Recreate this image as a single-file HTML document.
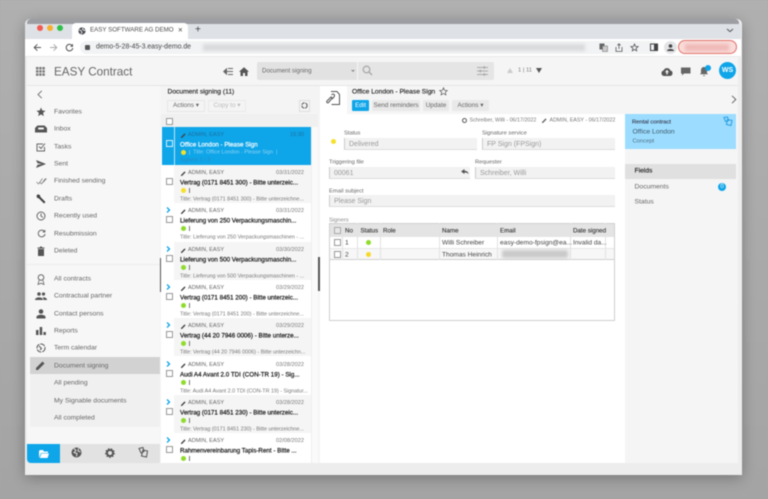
<!DOCTYPE html>
<html><head><meta charset="utf-8"><style>
*{box-sizing:border-box}
html,body{margin:0;padding:0;width:768px;height:499px;overflow:hidden;background:#a6a6a6}
body{font-family:"Liberation Sans",sans-serif;position:relative}
#r{position:absolute;left:0;top:0;width:768px;height:499px;filter:blur(.45px);overflow:hidden}
.b,.t,svg{position:absolute}
.t{white-space:nowrap;line-height:10px;font-size:6.6px;color:#666;transform:translateY(.7px)}
.s{left:54px;font-size:6.8px;color:#666}
.k{color:#222;-webkit-text-stroke:.15px #222}
.btn{position:absolute;height:12px;background:#e9e9e9;border-radius:1px;text-align:center;line-height:12px;font-size:6.4px;color:#666}
.f{position:absolute;background:#f2f2f2;border-left:1px solid #ccc;border-bottom:1px solid #ddd;height:12px;font-size:7px;line-height:13px;color:#999;padding-left:4px}
.l{font-size:5.8px;color:#666}
.cb{position:absolute;width:7px;height:7px;border:1px solid #999;background:#fff}
.row{position:absolute;left:162px;width:149px;height:38px}
.row .g{position:absolute;left:12px;top:0;width:137px;height:38px}
.row .a{position:absolute;left:18px;top:3px;font-size:5.6px;line-height:10px;color:#666;white-space:nowrap;padding-left:8px}
.row .d{position:absolute;right:7px;top:3px;font-size:5.6px;line-height:10px;color:#777}
.row .h{position:absolute;left:18px;top:12.5px;font-size:6.25px;line-height:10px;color:#111;-webkit-text-stroke:.2px #111;white-space:nowrap;transform:translateY(.5px)}
.row .o{position:absolute;left:18.5px;top:23px;width:5px;height:5px;border-radius:50%;background:#8fdc2c}
.row .v{position:absolute;left:27px;top:23px;width:1px;height:5px;background:#777}
.row .u{position:absolute;left:18px;top:28.5px;font-size:5.4px;line-height:10px;color:#777;white-space:nowrap;transform:translateY(.5px)}
.row .c{position:absolute;left:4px;top:13px;width:7px;height:7px;border:1px solid #999;background:#fff}
.row .p{position:absolute;left:19px;top:6px}
.row .m{position:absolute;left:4px;top:4px}
.th{position:absolute;top:223.5px;font-size:6.2px;line-height:13px;color:#333;-webkit-text-stroke:.12px #333;transform:translateY(.4px)}
.td{position:absolute;font-size:6.6px;line-height:11px;color:#444;white-space:nowrap;transform:translateY(.5px)}
.vl{position:absolute;width:1px;top:223px;height:37px;background:#e2e2e2}
</style></head><body><div id="r">
<!-- backdrop / window -->
<div class="b" style="left:0;top:0;width:768px;height:499px;background:linear-gradient(#b0b0b0,#a4a4a4)"></div>
<div class="b" style="left:25px;top:19px;width:717px;height:456px;background:#ededed;border-radius:5px 5px 0 0;box-shadow:0 3px 14px rgba(0,0,0,.28)"></div>
<div class="b" style="left:27px;top:19px;width:712px;height:5px;background:#9c9ea3;border-radius:4px 4px 0 0"></div>
<div class="b" style="left:25px;top:24px;width:716px;height:15px;background:#dee1e6"></div>
<div class="b" style="left:25px;top:39px;width:716px;height:17px;background:#fff"></div>
<div class="b" style="left:27px;top:56px;width:711px;height:407px;background:#f5f5f5"></div>
<!-- traffic lights -->
<div class="b" style="left:37px;top:25px;width:6px;height:6px;border-radius:50%;background:#f25a52"></div>
<div class="b" style="left:47px;top:25px;width:6px;height:6px;border-radius:50%;background:#f5b02e"></div>
<div class="b" style="left:57px;top:25px;width:6px;height:6px;border-radius:50%;background:#2fc24a"></div>
<!-- tab -->
<div class="b" style="left:72px;top:23px;width:116px;height:16px;background:#fff;border-radius:4px 4px 0 0"></div>
<svg style="left:78px;top:27px" width="8" height="8" viewBox="0 0 8 8"><circle cx="4" cy="4" r="3.6" fill="#4a4d52"/><path d="M1 3l2 .5 1 2-1 1.5M5 .8 4.5 2.4 6.5 3.500 7.4 3" stroke="#fff" fill="none" stroke-width=".8"/></svg>
<div class="t" style="left:90px;top:25px;font-size:6.2px;color:#4c4c4c;width:84px;overflow:hidden">EASY SOFTWARE AG DEMO (C</div>
<div class="t" style="left:178px;top:25px;font-size:8px;color:#444">×</div>
<div class="t" style="left:195px;top:25px;font-size:10px;color:#444">+</div>
<svg style="left:726px;top:28px" width="8" height="5" viewBox="0 0 8 5"><path d="M1 1l3 2.6L7 1" stroke="#555" fill="none"/></svg>
<!-- address bar -->
<svg style="left:33px;top:43px" width="9" height="9" viewBox="0 0 9 9"><path d="M8 4.500H1.200M4.400 1.300 1.200 4.500l3.200 3.200" stroke="#555" fill="none"/></svg>
<svg style="left:49px;top:43px" width="9" height="9" viewBox="0 0 9 9"><path d="M1 4.500h6.800M4.600 1.300l3.200 3.200-3.200 3.200" stroke="#aaa" fill="none"/></svg>
<svg style="left:65px;top:43px" width="9" height="9" viewBox="0 0 9 9"><path d="M7.400 3A3.300 3.300 0 1 0 7.800 5" stroke="#555" fill="none"/><path d="M8 .8v3H5z" fill="#555"/></svg>
<div class="b" style="left:80px;top:41px;width:579px;height:13px;background:#f1f3f4;border-radius:7px"></div>
<div class="b" style="left:85px;top:45px;width:5px;height:5px;background:#555;border-radius:1px"></div>
<div class="t" style="left:96px;top:42px;font-size:6.9px;color:#444">demo-5-28-45-3.easy-demo.de</div>
<div class="b" style="left:203px;top:44px;width:382px;height:7px;background:#d9dadb;filter:blur(1.5px)"></div>
<svg style="left:599px;top:43px" width="9" height="9" viewBox="0 0 9 9"><rect x=".5" y=".5" width="5" height="6" fill="#666"/><rect x="3.500" y="3" width="5" height="5.500" fill="#ccc" stroke="#666" stroke-width=".5"/></svg>
<svg style="left:615px;top:43px" width="8" height="9" viewBox="0 0 8 9"><path d="M1 4v4.400h6V4M4 6V1M2.400 2.400 4 .8l1.600 1.600" stroke="#555" fill="none" stroke-width=".8"/></svg>
<svg style="left:630px;top:43px" width="9" height="9" viewBox="0 0 9 9"><path d="M4.500 1l1 2.400 2.600.2-2 1.700.6 2.500-2.200-1.300-2.200 1.300.6-2.500-2-1.700 2.600-.2z" stroke="#555" fill="none" stroke-width=".8"/></svg>
<svg style="left:650px;top:43px" width="8" height="9" viewBox="0 0 8 9"><rect x=".5" y="1" width="7" height="6.500" fill="none" stroke="#444"/><rect x="4" y="1" width="3.500" height="6.500" fill="#444"/></svg>
<div class="b" style="left:664px;top:41px;width:13px;height:13px;border-radius:50%;background:#e3e4e6"></div>
<svg style="left:666px;top:43px" width="9" height="9" viewBox="0 0 9 9"><circle cx="4.500" cy="3" r="1.800" fill="#444"/><path d="M1 8c0-2.600 7-2.600 7 0z" fill="#444"/></svg>
<div class="b" style="left:678px;top:40px;width:59px;height:14px;border-radius:7px;background:#f9dcd9;border:1px solid #e2716a"></div>
<div class="b" style="left:685px;top:44px;width:44px;height:7px;background:#efb9b6;filter:blur(1.5px)"></div>
<!-- app header -->
<div class="b" style="left:27px;top:56px;width:711px;height:1px;background:#e8e8e8"></div>
<div class="b" style="left:27px;top:85px;width:711px;height:1px;background:#e6e6e6"></div>
<svg style="left:36px;top:67px" width="9" height="9" viewBox="0 0 9 9" fill="#777"><rect width="2.400" height="2.400"/><rect x="3.200" width="2.400" height="2.400"/><rect x="6.400" width="2.400" height="2.400"/><rect y="3.200" width="2.400" height="2.400"/><rect x="3.200" y="3.200" width="2.400" height="2.400"/><rect x="6.400" y="3.200" width="2.400" height="2.400"/><rect y="6.400" width="2.400" height="2.400"/><rect x="3.200" y="6.400" width="2.400" height="2.400"/><rect x="6.400" y="6.400" width="2.400" height="2.400"/></svg>
<div class="t" style="left:54px;top:66px;font-size:11.7px;line-height:11px;color:#666">EASY Contract</div>
<svg style="left:222px;top:67px" width="12" height="9" viewBox="0 0 12 9"><path d="M5 .8 1 4.500 5 8.200z" fill="#666"/><path d="M5 4.500h6M6 1.500h5M6 7.500h5" stroke="#666"/></svg>
<svg style="left:239px;top:67px" width="10" height="9" viewBox="0 0 10 9"><path d="M5 .3 0 4.800h1.500V9h2.500V6h2v3h2.500V4.800H10z" fill="#555"/></svg>
<div class="b" style="left:257px;top:62px;width:100px;height:18px;background:#e2e2e2;border-radius:2px 0 0 2px"></div>
<div class="b" style="left:358px;top:62px;width:136px;height:18px;background:#e5e5e5;border-radius:0 2px 2px 0"></div>
<div class="t" style="left:262px;top:65.500px;font-size:6.200px;color:#666">Document signing</div>
<div class="b" style="left:351px;top:70px;border:2px solid transparent;border-top:2.500px solid #888"></div>
<svg style="left:362px;top:65px" width="11" height="11" viewBox="0 0 11 11"><circle cx="4.500" cy="4.500" r="3.300" stroke="#aaa" stroke-width="1.300" fill="none"/><path d="M7 7l3 3" stroke="#aaa" stroke-width="1.500"/></svg>
<svg style="left:477px;top:66px" width="11" height="10" viewBox="0 0 11 10"><path d="M0 1.500h11M0 5h11M0 8.500h11" stroke="#aaa"/><rect x="6.500" y=".2" width="1.500" height="2.600" fill="#aaa"/><rect x="2.500" y="3.700" width="1.500" height="2.600" fill="#aaa"/><rect x="6.500" y="7.200" width="1.500" height="2.600" fill="#aaa"/></svg>
<div class="b" style="left:507px;top:68px;border:3px solid transparent;border-top:0;border-bottom:5px solid #ccc"></div>
<div class="t" style="left:518px;top:65px;font-size:5.800px;color:#777">1 | 11</div>
<div class="b" style="left:536px;top:68px;border:3px solid transparent;border-bottom:0;border-top:5px solid #555"></div>
<svg style="left:661px;top:67px" width="12" height="9" viewBox="0 0 12 9"><path d="M3 9a2.800 2.800 0 0 1-.4-5.500 3.600 3.600 0 0 1 6.800 0A2.800 2.800 0 0 1 9 9z" fill="#555"/><path d="M6 2.800 3.900 5.200h1.400v2.200h1.400V5.200h1.400z" fill="#f5f5f5"/></svg>
<svg style="left:681px;top:67px" width="10" height="9" viewBox="0 0 10 9"><path d="M0 .5h9.500v6H3L1 8.500V6.500H0z" fill="#666"/></svg>
<svg style="left:699px;top:66px" width="10" height="11" viewBox="0 0 10 11"><path d="M5 1c2 0 3 1.500 3 3.500V7l1 1.200H1L2 7V4.500C2 2.500 3 1 5 1zM4 9.200h2a1 1 0 0 1-2 0z" fill="#666"/></svg>
<div class="b" style="left:705px;top:65px;width:6px;height:6px;border-radius:50%;background:#0ea5e9"></div>
<div class="b" style="left:719px;top:62px;width:17px;height:17px;border-radius:50%;background:#0ea5e9;color:#fff;font-size:7px;font-weight:bold;text-align:center;line-height:17px">WS</div>
<!-- sidebar -->
<div class="b" style="left:27px;top:86px;width:133px;height:377px;background:#f7f7f7"></div>
<svg style="left:37px;top:90px" width="6" height="9" viewBox="0 0 6 9"><path d="M4.800 .8 1 4.500l3.800 3.700" stroke="#777" fill="none"/></svg>
<div class="t s" style="top:107px">Favorites</div>
<div class="t s" style="top:124px">Inbox</div>
<div class="t s" style="top:142px">Tasks</div>
<div class="t s" style="top:159px">Sent</div>
<div class="t s" style="top:176px">Finished sending</div>
<div class="t s" style="top:194px">Drafts</div>
<div class="t s" style="top:211px">Recently used</div>
<div class="t s" style="top:229px">Resubmission</div>
<div class="t s" style="top:246px">Deleted</div>
<div class="b" style="left:27px;top:264px;width:133px;height:1px;background:#ececec"></div>
<div class="t s" style="top:274px">All contracts</div>
<div class="t s" style="top:291px">Contractual partner</div>
<div class="t s" style="top:309px">Contact persons</div>
<div class="t s" style="top:326px">Reports</div>
<div class="t s" style="top:343px">Term calendar</div>
<div class="b" style="left:30px;top:357px;width:130px;height:17px;background:#d2d2d2"></div>
<div class="b" style="left:30px;top:374px;width:130px;height:53px;background:#f0f0f0"></div>
<div class="t s" style="top:361px">Document signing</div>
<div class="t s" style="top:378px">All pending</div>
<div class="t s" style="top:396px">My Signable documents</div>
<div class="t s" style="top:413px">All completed</div>
<!-- sidebar icons -->
<svg style="left:36px;top:107px" width="10" height="10" viewBox="0 0 10 10"><path d="M5 .5l1.300 3 3.200.3-2.400 2.100.7 3.200L5 7.400 2.200 9.100l.7-3.200L.5 3.800l3.200-.3z" fill="#555"/></svg>
<svg style="left:35px;top:125px" width="12" height="8" viewBox="0 0 12 8"><path d="M2.500.5h7L12 3v4.500H0V3z" fill="#555"/><rect x="3" y="2.500" width="6" height="2" rx="1" fill="#f7f7f7"/></svg>
<svg style="left:36px;top:142px" width="10" height="10" viewBox="0 0 10 10"><path d="M8.500 5v4H1V2h6" stroke="#666" fill="none"/><path d="M3 4.500l2 2 4-5" stroke="#666" fill="none"/></svg>
<svg style="left:36px;top:160px" width="10" height="8" viewBox="0 0 10 8"><path d="M0 0l10 4-10 4 1.500-3.200L6 4 1.500 3.200z" fill="#555"/></svg>
<svg style="left:36px;top:177px" width="11" height="8" viewBox="0 0 11 8"><path d="M.5 5l2 2 4-5.500M3.500 5l2 2 4-5.500M7 5.500 10.500 1.500" stroke="#777" fill="none" stroke-width=".7"/></svg>
<svg style="left:36px;top:194px" width="10" height="10" viewBox="0 0 10 10"><path d="M.5 1.500 2 .3l1.800.7.700 2L9.500 8 8 9.500 3 4.500 1 3.800z" fill="#444"/></svg>
<svg style="left:36px;top:211px" width="10" height="10" viewBox="0 0 10 10"><circle cx="5" cy="5" r="4" stroke="#666" fill="none"/><path d="M5 2.500V5l2 1.500" stroke="#666" fill="none"/></svg>
<svg style="left:37px;top:229px" width="9" height="9" viewBox="0 0 9 9"><path d="M7.400 2.500A3.400 3.400 0 1 0 8 5" stroke="#666" fill="none"/><path d="M8.300 .5v3H5.300z" fill="#666"/></svg>
<svg style="left:37px;top:246px" width="8" height="10" viewBox="0 0 8 10"><path d="M.5 1.500h7V2.500H.5zM1 3h6v7H1zM3 .5h2v1H3z" fill="#555"/></svg>
<svg style="left:37px;top:274px" width="8" height="11" viewBox="0 0 8 11"><circle cx="4" cy="3.500" r="2.800" stroke="#666" fill="none"/><path d="M2 6.500 1 10.500l3-1.300 3 1.300-1-4" stroke="#666" fill="none" stroke-width=".8"/></svg>
<svg style="left:35px;top:292px" width="12" height="8" viewBox="0 0 12 8"><circle cx="4" cy="2" r="1.800" fill="#555"/><circle cx="8.500" cy="2" r="1.600" fill="#555"/><path d="M0 8c0-3.500 8-3.500 8 0zM8.500 8h3.500c0-2.500-3-3-4.500-2.500 1 .8 1 1.500 1 2.500z" fill="#555"/></svg>
<svg style="left:36px;top:309px" width="10" height="10" viewBox="0 0 10 10"><circle cx="5" cy="2.500" r="2.300" fill="#555"/><path d="M.5 8c0-3 9-3 9 0v1.500H.5z" fill="#555"/></svg>
<svg style="left:36px;top:327px" width="10" height="8" viewBox="0 0 10 8" fill="#555"><rect y="3" width="2.500" height="5"/><rect x="3.700" width="2.500" height="8"/><rect x="7.400" y="5" width="2.500" height="3"/></svg>
<svg style="left:36px;top:343px" width="10" height="10" viewBox="0 0 10 10"><circle cx="5" cy="5" r="4" stroke="#555" fill="none" stroke-dasharray="5 1"/><path d="M3 3l2.500 2.500L4 7" stroke="#555" fill="none"/></svg>
<svg style="left:36px;top:361px" width="9" height="9" viewBox="0 0 9 9"><path d="M0 9V7L6.500.5l2 2L2 9z" fill="#555"/></svg>
<div class="b" style="left:160px;top:258px;width:2px;height:34px;background:#555"></div>
<!-- sidebar bottom -->
<div class="b" style="left:27px;top:444px;width:133px;height:19px;background:#e2e2e2"></div>
<div class="b" style="left:27px;top:444px;width:33px;height:19px;background:#0ea5e9;border-radius:0 0 0 4px"></div>
<svg style="left:39px;top:450px" width="10" height="8" viewBox="0 0 10 8"><path d="M1 0h3l1 1.500h4V3H2L0 8V1z M2.500 3.500H10L8.500 8H.8z" fill="#fff"/></svg>
<svg style="left:71px;top:447px" width="11" height="11" viewBox="0 0 11 11"><circle cx="5.500" cy="5.500" r="5" fill="#555"/><path d="M3 1.500l2 2-2 2 3 1 -.5 3M7.500 1.500 7 4l2.500 1" stroke="#e2e2e2" fill="none"/></svg>
<svg style="left:105px;top:448px" width="10" height="10" viewBox="0 0 10 10"><circle cx="5" cy="5" r="3" stroke="#555" stroke-width="2" fill="none"/><circle cx="5" cy="5" r="4.300" stroke="#555" stroke-width="1.200" fill="none" stroke-dasharray="1.500 1.500"/></svg>
<svg style="left:138px;top:447px" width="11" height="11" viewBox="0 0 11 11"><path d="M1 1.500 5 .5l1 4-3 1.500zM5 3l4.500 1-1 6-5-1z" stroke="#555" fill="none"/></svg>
<!-- list panel -->
<div class="b" style="left:161px;top:86px;width:157px;height:377px;background:#fff"></div>
<div class="b" style="left:161px;top:86px;width:158px;height:28px;background:#f4f4f4"></div>
<div class="b" style="left:161px;top:114px;width:157px;height:13px;background:#f0f0f0"></div>
<div class="t k" style="left:167.500px;top:87px;font-size:6.700px">Document signing (11)</div>
<div class="btn" style="left:167px;top:100px;width:38px;background:#f4f4f4;border:1px solid #e6e6e6;line-height:10px">Actions ▾</div>
<div class="btn" style="left:208px;top:100px;width:38px;background:#f4f4f4;border:1px solid #e9e9e9;line-height:10px;color:#bbb">Copy to ▾</div>
<div class="b" style="left:299px;top:100px;width:11px;height:12px;border:1px solid #ddd"></div>
<svg style="left:301px;top:102px" width="7" height="7" viewBox="0 0 7 7"><circle cx="3.500" cy="3.500" r="2.600" stroke="#555" fill="none" stroke-dasharray="3.500 .8"/></svg>
<div class="cb" style="left:166px;top:118px"></div>
<div class="b" style="left:311px;top:127px;width:7px;height:336px;background:#fafafa;border-left:1px solid #eee"></div>
<div class="b" style="left:318px;top:257px;width:2px;height:34px;background:#555"></div>

<div class="row" style="top:127px;background:#0ea5e9">
<div class="b" style="left:12px;top:0;width:1px;height:38px;background:#bfe6fa"></div>
<div class="c" style="background:transparent;border-color:#d9effb"></div>
<svg class="p" width="5" height="5" viewBox="0 0 5 5"><path d="M0 5V4L3.600.4l1 1L1 5z" fill="#444"/></svg>
<div class="a" style="color:#1b6f9e">ADMIN, EASY</div><div class="d" style="color:#1b6f9e">15:30</div>
<div class="h" style="color:#fff;-webkit-text-stroke:.2px #fff">Office London - Please Sign</div>
<div class="o" style="background:#f7e02a"></div><div class="v" style="background:#5fbfe9"></div>
<div class="u" style="left:31px;top:20px;color:#8ed5f5">Title: Office London - Please Sign &nbsp;|</div>
<div class="u" style="top:28px;color:#2a8bbd">Signed: 1 / 2</div>
</div>

<div class="row" style="top:165px"><div class="g" style="background:#f5f5f5"></div>
<div class="c"></div><svg class="p" width="5" height="5" viewBox="0 0 5 5"><path d="M0 5V4L3.600.4l1 1L1 5z" fill="#444"/></svg>
<div class="a">ADMIN, EASY</div><div class="d">03/31/2022</div>
<div class="h">Vertrag (0171 8451 300) - Bitte unterzeic...</div>
<div class="o" style="background:#f7e02a"></div><div class="v"></div>
<div class="u">Title: Vertrag (0171 8451 300) - Bitte unterzeichne...</div></div>

<div class="row" style="top:203px"><svg class="m" width="5" height="6" viewBox="0 0 5 6"><path d="M1 .5 3.500 3 1 5.500" stroke="#0ea5e9" stroke-width="1.300" fill="none"/></svg>
<div class="c"></div><svg class="p" width="5" height="5" viewBox="0 0 5 5"><path d="M0 5V4L3.600.4l1 1L1 5z" fill="#444"/></svg>
<div class="a">ADMIN, EASY</div><div class="d">03/31/2022</div>
<div class="h">Lieferung von 250 Verpackungsmaschin...</div>
<div class="o"></div><div class="v"></div>
<div class="u">Title: Lieferung von 250 Verpackungsmaschinen - ...</div></div>

<div class="row" style="top:242px"><div class="g" style="background:#f5f5f5"></div><svg class="m" width="5" height="6" viewBox="0 0 5 6"><path d="M1 .5 3.500 3 1 5.500" stroke="#0ea5e9" stroke-width="1.300" fill="none"/></svg>
<div class="c"></div><svg class="p" width="5" height="5" viewBox="0 0 5 5"><path d="M0 5V4L3.600.4l1 1L1 5z" fill="#444"/></svg>
<div class="a">ADMIN, EASY</div><div class="d">03/30/2022</div>
<div class="h">Lieferung von 500 Verpackungsmaschin...</div>
<div class="o"></div><div class="v"></div>
<div class="u">Title: Lieferung von 500 Verpackungsmaschinen - ...</div></div>

<div class="row" style="top:280px"><svg class="m" width="5" height="6" viewBox="0 0 5 6"><path d="M1 .5 3.500 3 1 5.500" stroke="#0ea5e9" stroke-width="1.300" fill="none"/></svg>
<div class="c"></div><svg class="p" width="5" height="5" viewBox="0 0 5 5"><path d="M0 5V4L3.600.4l1 1L1 5z" fill="#444"/></svg>
<div class="a">ADMIN, EASY</div><div class="d">03/29/2022</div>
<div class="h">Vertrag (0171 8451 200) - Bitte unterzeic...</div>
<div class="o"></div><div class="v"></div>
<div class="u">Title: Vertrag (0171 8451 200) - Bitte unterzeichne...</div></div>

<div class="row" style="top:318px"><div class="g" style="background:#f5f5f5"></div><svg class="m" width="5" height="6" viewBox="0 0 5 6"><path d="M1 .5 3.500 3 1 5.500" stroke="#0ea5e9" stroke-width="1.300" fill="none"/></svg>
<div class="c"></div><svg class="p" width="5" height="5" viewBox="0 0 5 5"><path d="M0 5V4L3.600.4l1 1L1 5z" fill="#444"/></svg>
<div class="a">ADMIN, EASY</div><div class="d">03/29/2022</div>
<div class="h">Vertrag (44 20 7946 0006) - Bitte unterze...</div>
<div class="o"></div><div class="v"></div>
<div class="u">Title: Vertrag (44 20 7946 0006) - Bitte unterzeichn...</div></div>

<div class="row" style="top:357px"><svg class="m" width="5" height="6" viewBox="0 0 5 6"><path d="M1 .5 3.500 3 1 5.500" stroke="#0ea5e9" stroke-width="1.300" fill="none"/></svg>
<div class="c"></div><svg class="p" width="5" height="5" viewBox="0 0 5 5"><path d="M0 5V4L3.600.4l1 1L1 5z" fill="#444"/></svg>
<div class="a">ADMIN, EASY</div><div class="d">03/28/2022</div>
<div class="h">Audi A4 Avant 2.0 TDI (CON-TR 19) - Sig...</div>
<div class="o"></div><div class="v"></div>
<div class="u">Title: Audi A4 Avant 2.0 TDI (CON-TR 19) - Signatur...</div></div>

<div class="row" style="top:395px"><div class="g" style="background:#f5f5f5"></div><svg class="m" width="5" height="6" viewBox="0 0 5 6"><path d="M1 .5 3.500 3 1 5.500" stroke="#0ea5e9" stroke-width="1.300" fill="none"/></svg>
<div class="c"></div><svg class="p" width="5" height="5" viewBox="0 0 5 5"><path d="M0 5V4L3.600.4l1 1L1 5z" fill="#444"/></svg>
<div class="a">ADMIN, EASY</div><div class="d">03/28/2022</div>
<div class="h">Vertrag (0171 8451 230) - Bitte unterzeic...</div>
<div class="o"></div><div class="v"></div>
<div class="u">Title: Vertrag (0171 8451 230) - Bitte unterzeichne...</div></div>

<div class="row" style="top:433px;height:30px"><svg class="m" width="5" height="6" viewBox="0 0 5 6"><path d="M1 .5 3.500 3 1 5.500" stroke="#0ea5e9" stroke-width="1.300" fill="none"/></svg>
<div class="c"></div><svg class="p" width="5" height="5" viewBox="0 0 5 5"><path d="M0 5V4L3.600.4l1 1L1 5z" fill="#444"/></svg>
<div class="a">ADMIN, EASY</div><div class="d">02/08/2022</div>
<div class="h">Rahmenvereinbarung Tapis-Rent - Bitte ...</div>
<div class="o"></div><div class="v"></div></div>

<!-- main panel -->
<div class="b" style="left:320px;top:86px;width:305px;height:377px;background:#fff"></div>
<div class="b" style="left:320px;top:86px;width:418px;height:28px;background:#f5f5f5"></div>
<div class="b" style="left:320px;top:86px;width:27px;height:28px;background:#fff"></div>
<svg style="left:326px;top:90px" width="15" height="16" viewBox="0 0 15 16"><path d="M5 1.500h6l2.500 3v10h-8" stroke="#555" fill="none"/><path d="M1 11l4-4 1 .5-.5 1.500-3 3.500c-1 1-2.500-.5-1.500-1.500z M5.500 5c1-1.500 3-1 3 .5S6 9 6 9" stroke="#555" fill="none"/></svg>
<div class="t k" style="left:352px;top:87px;font-size:6.700px">Office London - Please Sign</div>
<svg style="left:439px;top:87px" width="9" height="9" viewBox="0 0 9 9"><path d="M4.500 .8l1.100 2.500 2.700.2-2 1.800.6 2.600-2.400-1.400L2.100 7.900l.6-2.600-2-1.800 2.700-.2z" stroke="#555" fill="none" stroke-width=".7"/></svg>
<div class="btn" style="left:352px;top:100px;width:17px;height:11px;line-height:11px;background:#0ea5e9;color:#fff">Edit</div>
<div class="btn" style="left:372px;top:100px;width:48px;height:11px;line-height:11px">Send reminders</div>
<div class="btn" style="left:423px;top:100px;width:26px;height:11px;line-height:11px">Update</div>
<div class="btn" style="left:452px;top:100px;width:37px;height:11px;line-height:11px">Actions ▾</div>
<svg style="left:731px;top:95px" width="6" height="9" viewBox="0 0 6 9"><path d="M1 .8l3.800 3.700L1 8.200" stroke="#666" fill="none"/></svg>

<svg style="left:461.500px;top:118px" width="5" height="5" viewBox="0 0 5 5"><circle cx="2.500" cy="2.500" r="2" stroke="#666" stroke-width="1.100" fill="none"/></svg>
<div class="t l" style="left:469.500px;top:115px;color:#777;font-size:5.350px">Schreiber, Willi - 06/17/2022</div>
<svg style="left:542px;top:118px" width="5" height="5" viewBox="0 0 5 5"><path d="M0 5V4L3.600.4l1 1L1 5z" fill="#666"/></svg>
<div class="t l" style="left:549.500px;top:115px;color:#777;font-size:5.350px">ADMIN, EASY - 06/17/2022</div>

<div class="b" style="left:331px;top:139px;width:5px;height:5px;border-radius:50%;background:#f7e02a"></div>
<div class="t l" style="left:344px;top:128px">Status</div>
<div class="f" style="left:344px;top:138px;width:133px">Delivered</div>
<div class="t l" style="left:482px;top:128px">Signature service</div>
<div class="f" style="left:482px;top:138px;width:133px">FP Sign (FPSign)</div>
<div class="t l" style="left:329px;top:157px">Triggering file</div>
<div class="f" style="left:329px;top:167px;width:141px">00061</div>
<svg style="left:461px;top:169px" width="8" height="6" viewBox="0 0 8 6"><path d="M3.500 0 0 2.500l3.500 2.500V3.500c2 0 3.500.5 4 2 0-2.500-1.500-3.500-4-3.700z" fill="#555"/></svg>
<div class="t l" style="left:475px;top:157px">Requester</div>
<div class="f" style="left:475px;top:167px;width:140px">Schreiber, Willi</div>
<div class="t l" style="left:329px;top:186px">Email subject</div>
<div class="f" style="left:329px;top:195px;width:286px">Please Sign</div>
<div class="t l" style="left:329px;top:215px;color:#888">Signers</div>

<div class="b" style="left:329px;top:223px;width:286px;height:98px;background:#fff;border:1px solid #cfcfcf"></div>
<div class="b" style="left:330px;top:224px;width:284px;height:13px;background:#e4e4e4"></div>
<div class="b" style="left:330px;top:248px;width:284px;height:1px;background:#e6e6e6"></div>
<div class="b" style="left:330px;top:249px;width:284px;height:10px;background:#f7f7f7"></div>
<div class="b" style="left:330px;top:259px;width:284px;height:1px;background:#cfcfcf"></div>
<div class="vl" style="left:342px"></div><div class="vl" style="left:357px"></div><div class="vl" style="left:380px"></div><div class="vl" style="left:439px"></div><div class="vl" style="left:497px"></div><div class="vl" style="left:570px"></div><div class="vl" style="left:605px"></div>
<div class="cb" style="left:334px;top:227px;background:#e8e8e8;border-color:#aaa"></div>
<div class="th" style="left:345px">No</div><div class="th" style="left:360.500px">Status</div><div class="th" style="left:383px">Role</div><div class="th" style="left:442px">Name</div><div class="th" style="left:500px">Email</div><div class="th" style="left:573px">Date signed</div>
<div class="cb" style="left:334px;top:239px"></div><div class="cb" style="left:334px;top:251px"></div>
<div class="td" style="left:345px;top:237px">1</div><div class="td" style="left:345px;top:248.500px">2</div>
<div class="b" style="left:366px;top:240px;width:5px;height:5px;border-radius:50%;background:#8fdc2c"></div>
<div class="b" style="left:366px;top:252px;width:5px;height:5px;border-radius:50%;background:#f7d82a"></div>
<div class="td" style="left:442px;top:237px">Willi Schreiber</div>
<div class="td" style="left:442px;top:248.500px">Thomas Heinrich</div>
<div class="td" style="left:500px;top:237px">easy-demo-fpsign@ea...</div>
<div class="td" style="left:573px;top:237px">Invalid da...</div>
<div class="b" style="left:502px;top:250px;width:66px;height:8px;background:#c9c9c9;filter:blur(1.500px)"></div>

<!-- right panel -->
<div class="b" style="left:625px;top:114px;width:112px;height:349px;background:#f5f5f5"></div>
<div class="b" style="left:625px;top:114px;width:111px;height:35px;background:#9bdcff"></div>
<div class="t k" style="left:632px;top:117px;font-size:5.800px;color:#334;-webkit-text-stroke:.1px #334">Rental contract</div>
<div class="t" style="left:632.500px;top:127px;font-size:6.800px;color:#3f5a6a">Office London</div>
<div class="t" style="left:632.500px;top:136px;font-size:5.800px;color:#4f6f82">Concept</div>
<svg style="left:723px;top:116px" width="10" height="10" viewBox="0 0 10 10"><path d="M1 1.500 4.500 1l1 3.500-3 1zM4.500 3.500 9 4.500l-1 5-4.500-1z" stroke="#2a9fe0" fill="none"/></svg>
<div class="b" style="left:625px;top:164px;width:111px;height:15px;background:#e0e0e0"></div>
<div class="t k" style="left:634.500px;top:166px;font-size:6.700px;color:#222">Fields</div>
<div class="t" style="left:634.500px;top:182px;font-size:6.800px">Documents</div>
<div class="b" style="left:718px;top:183px;width:8px;height:8px;border-radius:50%;background:#0ea5e9;color:#fff;font-size:6px;line-height:8px;text-align:center">0</div>
<div class="t" style="left:634.500px;top:197px;font-size:6.800px">Status</div>
</div></body></html>
